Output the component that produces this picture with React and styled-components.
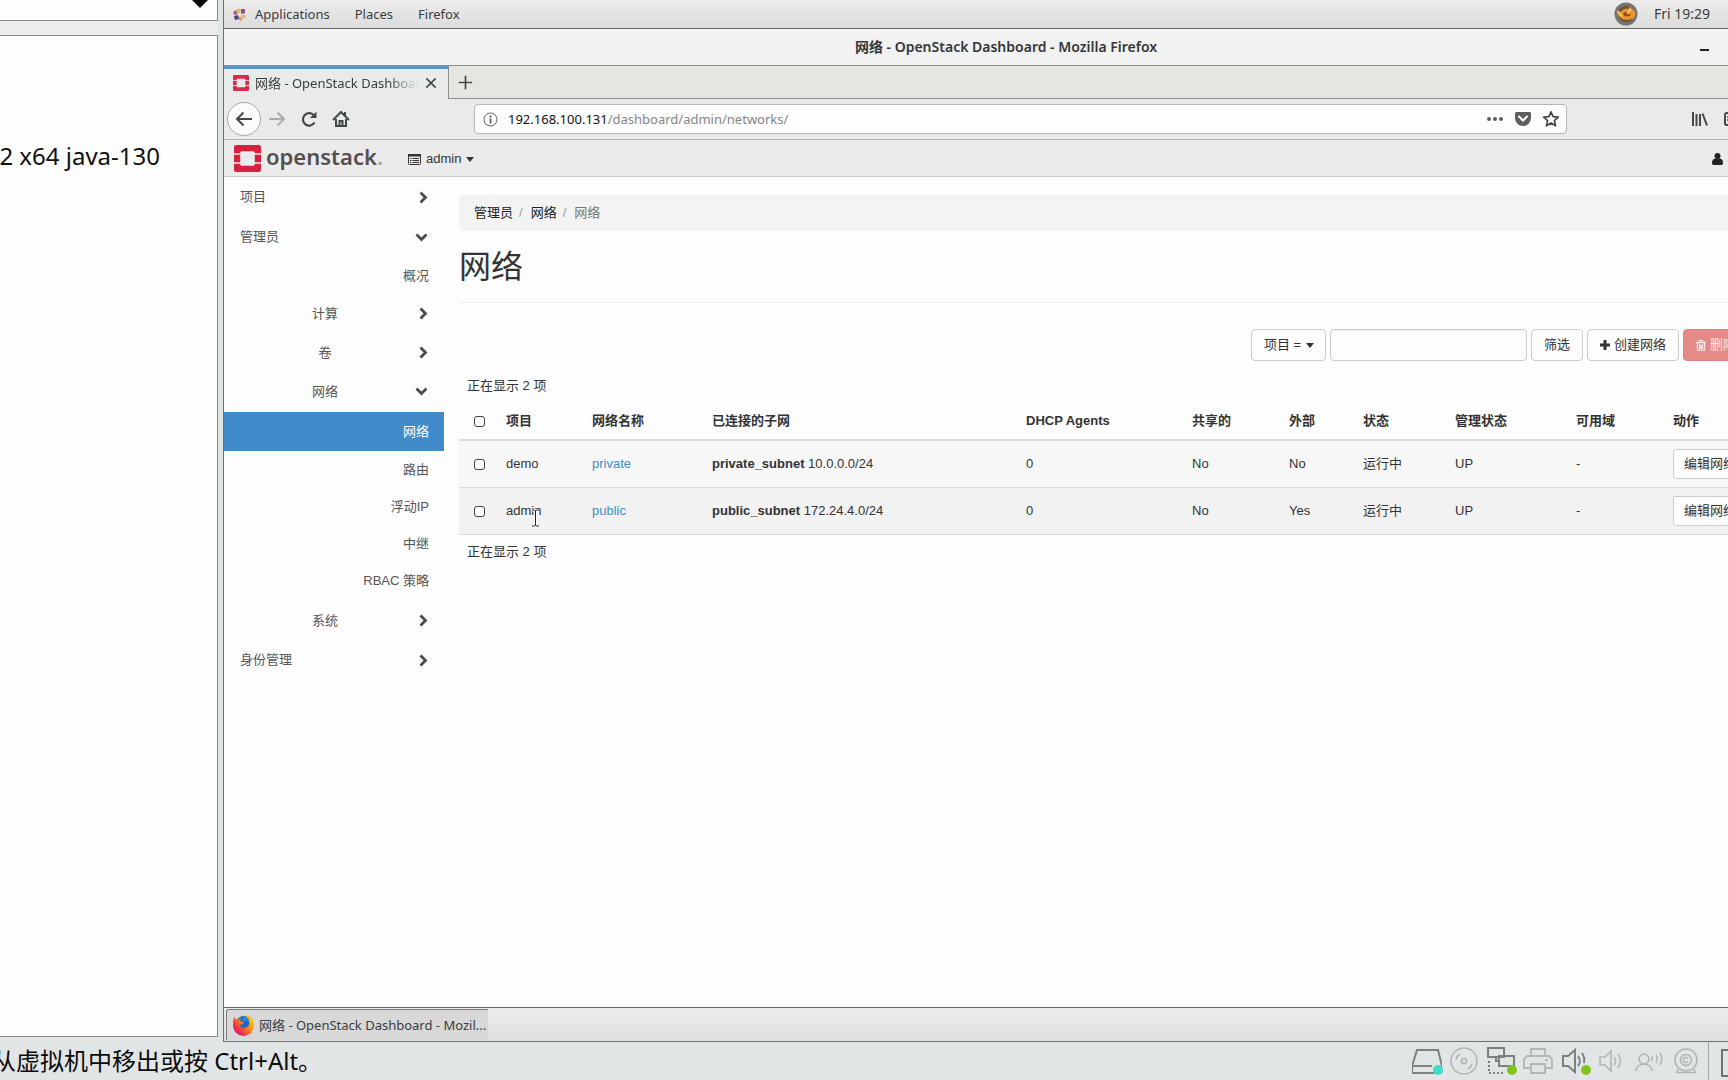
import React from "react";
import styled, { createGlobalStyle, css } from "styled-components";

const shellFont = `"Noto Sans", "Noto Sans CJK SC", sans-serif`;
const pageFont = `"Liberation Sans", "Noto Sans CJK SC", sans-serif`;

const GlobalStyle = createGlobalStyle`
  *, *::before, *::after { box-sizing: border-box; }
  body { margin: 0; overflow: hidden; background: #e2e5e6; }
  button, input, select { font: inherit; color: inherit; margin: 0; }
  svg { display: block; flex: none; }
  ul, ol { list-style: none; margin: 0; padding: 0; }
  a { color: inherit; text-decoration: none; }
`;

/* ---------- host window ---------- */

const Host = styled.div`
  display: flex;
  flex-direction: column;
  height: 100vh;
  overflow: hidden;
  background: #e2e5e6;
`;

const Workspace = styled.div`
  flex: 1;
  min-height: 0;
  display: flex;
  gap: 5px;
`;

const Library = styled.aside`
  flex: none;
  width: 218px;
  display: flex;
  flex-direction: column;
  gap: 14px;
  padding-bottom: 5px;
  background: linear-gradient(#ececec 0 40px, #e2e5e6 40px);
  font: 24px/32px ${shellFont};
  color: #111;
`;

const Summary = styled.section`
  height: 21px;
  display: flex;
  justify-content: flex-end;
  padding-right: 9px;
  background: #fdfdfd;
  border: solid #8a8a8a;
  border-width: 0 1px 1px 0;
`;

const Inventory = styled.section`
  flex: 1;
  display: flex;
  align-items: flex-start;
  justify-content: flex-end;
  padding: 104px 57px 0 0;
  overflow: hidden;
  white-space: nowrap;
  background: #fdfdfd;
  border: solid #8a8a8a;
  border-width: 1px 1px 1px 0;
`;

const StatusBar = styled.footer`
  flex: none;
  height: 38px;
  display: flex;
  align-items: center;
  justify-content: space-between;
  overflow: hidden;
  font: 24px/38px ${shellFont};
  color: #0b0b0b;
  white-space: nowrap;
`;

const Hint = styled.p`
  margin: 0 0 0 -8px;
`;

const Devices = styled.ul`
  display: flex;
  align-items: center;
  height: 38px;
  gap: 7px;
`;

const Device = styled.li`
  position: relative;
  width: 30px;
  height: 30px;
  color: ${(p) => (p.$on ? "#7c8082" : "#b3b6b8")};
`;

const Lamp = styled.span`
  position: absolute;
  right: -1px;
  bottom: 1px;
  width: 10px;
  height: 10px;
  border-radius: 50%;
  background: ${(p) => p.$color};
`;

const ScreenToggle = styled.li`
  height: 38px;
  width: 20px;
  overflow: hidden;
  border-left: 1px solid #a5a8a9;
  padding: 7px 0 0 12px;
  color: #6f7375;
`;

/* ---------- guest desktop ---------- */

const Viewport = styled.div`
  flex: 1;
  min-width: 0;
  overflow: hidden;
  border: solid #707070;
  border-width: 0 0 1px 1px;
`;

const Desktop = styled.div`
  width: calc(100% + 60px);
  height: 100%;
  display: flex;
  flex-direction: column;
  font: 14px/20px ${shellFont};
  color: #3a3c3e;
  background: #fdfdfd;
`;

const TopPanel = styled.header`
  flex: none;
  height: 29px;
  display: flex;
  align-items: center;
  padding: 0 78px 0 8px;
  font-size: 13px;
  background: linear-gradient(#ececec, #dcdcdc);
  border-bottom: 1px solid #666;
`;

const PanelButton = styled.button`
  display: flex;
  align-items: center;
  gap: 8px;
  height: 28px;
  padding: 0;
  margin-right: 25px;
  border: 0;
  background: none;
`;

const Clock = styled.time`
  margin-left: 16px;
  font-size: 14px;
`;

const Push = styled.span`
  flex: 1;
`;

const TitleBar = styled.div`
  flex: none;
  height: 37px;
  display: grid;
  grid-template-columns: 1fr auto 1fr;
  align-items: center;
  font-size: 14px;
  font-weight: 600;
  color: #33373a;
  background: linear-gradient(#f7f7f7, #f2f2f2 8px);
  border-bottom: 1px solid #8f908e;
`;

const Minimise = styled.button`
  justify-self: end;
  display: flex;
  align-items: center;
  width: 30px;
  height: 28px;
  margin-right: 62px;
  padding: 5px 0 0 4px;
  border: 0;
  background: none;
  color: #202426;
`;

const TabStrip = styled.div`
  flex: none;
  height: 33px;
  display: flex;
  background: #e6e6e3;
`;

const Tab = styled.div`
  width: 225px;
  display: flex;
  align-items: center;
  gap: 6px;
  padding: 0 10px 2px 9px;
  font-size: 13px;
  background: #e9ebea;
  border-top: 3px solid #5b93bf;
  border-right: 1px solid #8f908e;
`;

const TabLabel = styled.span`
  flex: 1;
  overflow: hidden;
  white-space: nowrap;
  mask-image: linear-gradient(90deg, #000 82%, transparent 100%);
`;

const TabTools = styled.div`
  flex: 1;
  padding-left: 5px;
  border-bottom: 1px solid #8f908e;
`;

const IconButton = styled.button`
  display: grid;
  place-items: center;
  flex: none;
  width: ${(p) => p.$size || 32}px;
  height: ${(p) => p.$height || p.$size || 32}px;
  padding: 0;
  border: 0;
  background: none;
  color: ${(p) => (p.$dim ? "#a9acaa" : "#45484a")};
  ${(p) =>
    p.$round &&
    css`
      border: 1px solid #aaa;
      border-radius: 50%;
      background: #fbfbfb;
    `}
`;

const NavBar = styled.div`
  flex: none;
  height: 41px;
  display: flex;
  align-items: center;
  padding: 0 8px 0 3px;
  background: #e8ebe8;
  border-bottom: 1px solid #b1b3b1;
`;

const NavGap = styled.span`
  width: 117px;
`;

const AddressBar = styled.div`
  flex: 1;
  display: flex;
  align-items: center;
  gap: 10px;
  height: 30px;
  padding: 0 1px 0 8px;
  background: #fdfdfd;
  border: 1px solid #b4b5b4;
  border-radius: 4px;
  color: #606264;
`;

const AddressText = styled.a`
  flex: 1;
  font-size: 13px;
  color: #858585;
`;

const HostName = styled.span`
  color: #111;
`;

const AddressTools = styled.span`
  display: flex;
`;

/* ---------- dashboard ---------- */

const Page = styled.div`
  flex: 1;
  min-height: 0;
  display: flex;
  flex-direction: column;
  font: 13px/20px ${pageFont};
  color: #333;
`;

const SiteHeader = styled.header`
  flex: none;
  height: 37px;
  display: flex;
  align-items: center;
  padding: 0 12px 0 10px;
  background: #ebebeb;
  border-bottom: 1px solid #c9c9c9;
`;

const Brand = styled.a`
  display: flex;
  align-items: center;
  gap: 5px;
  margin-right: 25px;
  font: 600 22px/32px "Noto Sans", sans-serif;
  color: #55504f;
`;

const BrandName = styled.span`
  margin-top: -4px;
`;

const BrandDot = styled.span`
  color: #a3a3a3;
`;

const MenuButton = styled.button`
  display: flex;
  align-items: center;
  gap: 5px;
  padding: 2px 0 0;
  border: 0;
  background: none;
`;

const Body = styled.div`
  flex: 1;
  min-height: 0;
  display: flex;
`;

const Sidebar = styled.nav`
  flex: none;
  width: 220px;
  color: #555;
`;

const Group = styled.ul`
  padding: ${(p) => (p.$nested ? "1px 0 2px" : "0")};
`;

const SectionButton = styled.button`
  display: grid;
  grid-template-columns: 1fr 20px;
  align-items: center;
  width: 100%;
  height: ${(p) => (p.$sub ? 39 : 40)}px;
  padding: 0 16px;
  text-align: ${(p) => (p.$sub ? "center" : "left")};
  border: 0;
  background: none;
  svg { justify-self: end; }
`;

const SectionName = styled.span`
  padding-left: ${(p) => (p.$sub ? 2 : 0)}px;
`;

const Leaf = styled.a`
  display: flex;
  align-items: center;
  justify-content: flex-end;
  height: 37px;
  padding-right: 15px;
  ${(p) =>
    p.$active &&
    css`
      height: 39px;
      background: #428bca;
      color: #fff;
    `}
`;

const Main = styled.main`
  position: relative;
  flex: 1;
  min-width: 0;
  padding: 18px 15px 0;
`;

const Breadcrumb = styled.ol`
  display: flex;
  align-items: center;
  height: 36px;
  padding: 0 15px;
  background: #f3f3f3;
  border-radius: 4px;
`;

const Crumb = styled.li`
  color: #222;
  & + &::before {
    content: "/";
    padding: 0 8px 0 6px;
    color: #999;
  }
  &:last-child { color: #777; }
`;

const Heading = styled.h1`
  margin: 0;
  padding: 14px 0;
  height: 72px;
  font-size: 32px;
  line-height: 44px;
  font-weight: 400;
  color: #333;
  border-bottom: 1px solid #ececec;
`;

const Actions = styled.form`
  display: flex;
  justify-content: flex-end;
  gap: 4px;
  padding: 26px 0 14px;
`;

const control = css`
  height: 32px;
  border: 1px solid #ccc;
  border-radius: 4px;
  background: #fdfdfd;
`;

const FilterField = styled.label`
  position: relative;
  display: flex;
  align-items: center;
`;

const FilterSelect = styled.select`
  ${control}
  appearance: none;
  width: 75px;
  padding: 0 0 0 12px;
`;

const SelectCaret = styled.span`
  position: absolute;
  right: 12px;
  pointer-events: none;
`;

const FilterInput = styled.input`
  ${control}
  width: 197px;
  padding: 0 8px;
  box-shadow: inset 0 1px 1px rgba(0, 0, 0, 0.06);
`;

const Button = styled.button`
  ${control}
  display: flex;
  align-items: center;
  gap: 4px;
  padding: 0 12px;
  white-space: nowrap;
  ${(p) =>
    p.$danger &&
    css`
      padding-right: 10px;
      background: #e48b88;
      border-color: #dd8380;
      color: #fbe9e8;
    `}
`;

const Count = styled.p`
  margin: 0;
  padding: ${(p) => (p.$after ? "6px 8px 0" : "0 8px 2px")};
  line-height: 22px;
`;

const Table = styled.table`
  width: 100%;
  table-layout: fixed;
  border-collapse: collapse;
`;

const Th = styled.th`
  height: 41px;
  padding: 4px 8px 0;
  text-align: left;
  vertical-align: middle;
  white-space: nowrap;
  font-weight: 700;
  border-bottom: 2px solid #dadada;
`;

const Row = styled.tr`
  height: 47px;
  background: ${(p) => (p.$shaded ? "#f2f2f2" : "#f7f7f7")};
  border-bottom: 1px solid #dadada;
`;

const Td = styled.td`
  padding: 0 8px;
  white-space: nowrap;
`;

const Tick = styled.input`
  appearance: none;
  display: block;
  width: 11px;
  height: 11px;
  margin: 1px 0 0 7px;
  border: 1px solid #444;
  border-radius: 3px;
  background: #fff;
`;

const NetLink = styled.a`
  color: #428bca;
`;

const Split = styled.span`
  display: flex;
`;

const SplitButton = styled.button`
  height: 30px;
  padding: 0 10px;
  border: 1px solid #ccc;
  border-radius: 3px 0 0 3px;
  background: #fdfdfd;
  & + & {
    margin-left: -1px;
    padding: 0 6px;
    border-radius: 0 3px 3px 0;
  }
`;

const Pointer = styled.span`
  position: absolute;
  left: 87px;
  top: 332px;
`;

const Taskbar = styled.footer`
  flex: none;
  height: 34px;
  padding: 1px 2px;
  background: linear-gradient(#ececec, #dedede);
  border-top: 1px solid #666;
`;

const TaskButton = styled.button`
  display: flex;
  align-items: center;
  gap: 4px;
  width: 262px;
  height: 31px;
  padding: 0 5px;
  font-size: 13px;
  white-space: nowrap;
  background: #d8d8d8;
  border: solid #7d7d7d;
  border-width: 1px 0 0 1px;
  border-radius: 3px 0 0 0;
`;

/* ---------- drawings ---------- */

const Caret = () => (
  <svg width="8" height="5" viewBox="0 0 8 5"><path d="M0 0h8L4 5z" fill="currentColor" /></svg>
);

const Chevron = ({ open }) =>
  open ? (
    <svg width="13" height="9" viewBox="0 0 13 9"><path d="M1.5 1.5l5 5 5-5" fill="none" stroke="#4a4a4a" strokeWidth="2.8" /></svg>
  ) : (
    <svg width="9" height="13" viewBox="0 0 9 13"><path d="M1.5 1.5l5 5-5 5" fill="none" stroke="#4a4a4a" strokeWidth="2.8" /></svg>
  );

const StackLogo = ({ size, color }) => (
  <svg width={size} height={size} viewBox="0 0 26 26">
    <g fill={color}>
      <path d="M2 0h22a2 2 0 0 1 2 2v6h-6V7.500a1.500 1.500 0 0 0-1.500-1.500h-11A1.500 1.500 0 0 0 6 7.500V8H0V2a2 2 0 0 1 2-2z" />
      <path d="M0 9.500h6v7H0zM20 9.500h6v7h-6z" />
      <path d="M2 26h22a2 2 0 0 0 2-2v-6h-6v.5a1.500 1.500 0 0 1-1.500 1.500h-11A1.500 1.500 0 0 1 6 18.500V18H0v6a2 2 0 0 0 2 2z" />
    </g>
  </svg>
);

const Pinwheel = () => (
  <svg width="15" height="15" viewBox="0 0 15 15">
    <path d="M6 1l3 2-2 4-3-3z" fill="#d9c45a" />
    <path d="M9 2h4v4L9 7z" fill="#8d4d8b" />
    <path d="M13 7l1 3-3 2-3-4z" fill="#e0c070" />
    <path d="M8 9l3 4-3 1-2-3z" fill="#dd9a6a" />
    <path d="M2 9l4-1 1 4-4 1z" fill="#4b4478" />
    <path d="M1 5l3-2 2 4-4 1z" fill="#b8578c" />
    <circle cx="7.500" cy="7.500" r="1" fill="#fff" />
  </svg>
);

const Orb = () => (
  <svg width="24" height="24" viewBox="0 0 24 24">
    <circle cx="12" cy="12" r="11.500" fill="#77736e" />
    <circle cx="12" cy="12" r="8" fill="#6d5238" />
    <path d="M2.500 8.500c2 0 3 1 4 2C8 7 12 6 14 7l2.500-2.500L18 7c4 1 4 8 1 9.500-4 2-9 2-12-.5-2-1-4-3-4.500-7.500z" fill="#ea9530" />
    <path d="M9 12c1-2 4-3 5-2l-2 2 5 .5c-1 2.500-6 3-8-.5z" fill="#8d4a14" />
    <path d="M4 10c2 0 2 3 4 4M13 11l4-4" stroke="#fbd28c" strokeWidth="1.500" fill="none" />
  </svg>
);

const FirefoxLogo = () => (
  <svg width="23" height="23" viewBox="0 0 23 23">
    <defs>
      <linearGradient id="fox" x1="1" y1="0" x2="0.100" y2="0.900">
        <stop offset="0" stopColor="#ffe226" />
        <stop offset="0.450" stopColor="#ff9412" />
        <stop offset="0.800" stopColor="#f0304a" />
        <stop offset="1" stopColor="#d3117c" />
      </linearGradient>
    </defs>
    <circle cx="12" cy="11" r="9" fill="#1c66c0" />
    <path d="M2 3l3 3 4-2-1 3 4 1-1 2-3 1c0 3 4 4 7 2 3-1 3-6 0-9l-1-3c5 0 8 5 8 10a10.500 10.500 0 0 1-21 1C1 9 1 6 2 3z" fill="url(#fox)" />
    <path d="M10 4c3-2 6-1 7 2l-2 1-4 0z" fill="#2b8ae0" />
  </svg>
);

const Stroke = ({ size = 18, w = 2, children }) => (
  <svg width={size} height={size} viewBox="0 0 18 18" fill="none" stroke="currentColor" strokeWidth={w}>{children}</svg>
);

const BackIcon = () => <Stroke><path d="M17 9H2M8.500 2.500L2 9l6.500 6.500" /></Stroke>;
const ForwardIcon = () => <Stroke><path d="M1 9h15M9.500 2.500L16 9l-6.500 6.500" /></Stroke>;
const ReloadIcon = () => (
  <Stroke><path d="M14.500 12.500A6.200 6.200 0 1 1 13.500 5" strokeWidth="2.200" /><path d="M16.500 1.500v6.500H10z" fill="currentColor" stroke="none" /></Stroke>
);
const HomeIcon = () => (
  <Stroke><path d="M1 10l8-8 8 8M4 9v7h10V9" /><path d="M7.500 16v-5h3v5M13 2v4" /></Stroke>
);
const InfoIcon = () => (
  <svg width="15" height="15" viewBox="0 0 15 15" fill="none" stroke="currentColor"><circle cx="7.500" cy="7.500" r="6.500" /><path d="M7.500 6.500v5M7.500 3.500v2" strokeWidth="1.800" /></svg>
);
const DotsIcon = () => (
  <svg width="18" height="18" viewBox="0 0 18 18" fill="#5c5f61"><circle cx="3" cy="9" r="2" /><circle cx="9" cy="9" r="2" /><circle cx="15" cy="9" r="2" /></svg>
);
const PocketIcon = () => (
  <svg width="18" height="18" viewBox="0 0 18 18"><path d="M2.500 2h13A1.500 1.500 0 0 1 17 3.500V8A8 8 0 0 1 1 8V3.500A1.500 1.500 0 0 1 2.500 2z" fill="#5c5f61" /><path d="M5 6.500l4 4 4-4" fill="none" stroke="#fff" strokeWidth="2" strokeLinecap="round" /></svg>
);
const StarIcon = () => (
  <Stroke><path d="M9 1.800l2.100 4.800 5.200.5-3.900 3.500 1.100 5.200L9 13.100l-4.500 2.700 1.100-5.200L1.700 7.100l5.200-.5z" strokeWidth="1.700" strokeLinejoin="round" /></Stroke>
);
const LibraryIcon = () => <Stroke><path d="M2 2v14M5.500 4v12M9 4v12M11.500 3.500L16 15.500" /></Stroke>;
const PanelIcon = () => <Stroke><rect x="2" y="3" width="14" height="12" rx="2" /><path d="M4 7h4M4 10h4M10 3v12" strokeWidth="1.500" /></Stroke>;
const BurgerIcon = () => <Stroke><path d="M2 4h14M2 9h14M2 14h14" /></Stroke>;

const ListIcon = () => (
  <svg width="13" height="11" viewBox="0 0 13 11"><rect x="0.500" y="0.500" width="12" height="10" rx="1" fill="none" stroke="currentColor" /><path d="M0 0h13v2.500H0zM2 4h1.500v1H2zM2 6h1.500v1H2zM2 8h1.500v1H2zM4.500 4H11v1H4.500zM4.500 6H11v1H4.500zM4.500 8H11v1H4.500z" fill="currentColor" /></svg>
);
const UserIcon = () => (
  <svg width="11" height="12" viewBox="0 0 11 12" fill="#222"><circle cx="5.500" cy="3" r="3" /><path d="M3 5.500h5c2 .5 3 2 3 4.500 0 1.500-.8 2-2 2H2c-1.200 0-2-.5-2-2 0-2.500 1-4 3-4.500z" /></svg>
);
const PlusIcon = () => (
  <svg width="10" height="10" viewBox="0 0 10 10"><path d="M5 0v10M0 5h10" stroke="currentColor" strokeWidth="3" /></svg>
);
const TrashIcon = () => (
  <svg width="10" height="11" viewBox="0 0 10 11"><path d="M3.500 1.500v-1h3v1M0 2.500h10M1.500 3v7.200h7V3M3.600 4.500v4.500M6.400 4.500v4.500M5 4.500v4.500" fill="none" stroke="currentColor" strokeWidth="1.300" /></svg>
);

const Line = ({ w = 2, children }) => (
  <svg width="30" height="30" viewBox="0 0 30 30" fill="none" stroke="currentColor" strokeWidth={w}>{children}</svg>
);

const devices = [
  { name: "硬盘", on: true, lamp: "#3fdcc8", art: <Line><path d="M5 4h21l4 16v7H0v-7zM0 20h20" /></Line> },
  { name: "光驱", art: <Line w={1.600}><circle cx="15" cy="15" r="13" /><circle cx="15" cy="15" r="2.500" /><path d="M7 14a8 8 0 0 1 4-6M23 18a8 8 0 0 1-4 5" /></Line> },
  { name: "网络适配器", on: true, lamp: "#7fc41c", art: <Line><path d="M2 2h16v9H2zM13 10h15v10H13z" /><path d="M10 11v4h3" /><path d="M3 15v12h16" strokeDasharray="2 2" /></Line> },
  { name: "打印机", art: <Line w={1.800}><path d="M8 10V3h14v7M8 22H1V13l3-3h22l3 3v9h-7M8 18h14v9H8zM22 14h3" /></Line> },
  { name: "声卡", on: true, lamp: "#7fc41c", art: <Line><path d="M3 10h5l7-6v22l-7-6H3z" /><path d="M18 10a8 8 0 0 1 0 10M22 7a13 13 0 0 1 2 10" /></Line> },
  { name: "扬声器", art: <Line w={1.600}><path d="M3 11h5l6-6v20l-6-6H3z" /><path d="M17 11a7 7 0 0 1 0 8M21 8a12 12 0 0 1 0 14" /></Line> },
  { name: "麦克风", art: <Line w={1.600}><circle cx="10" cy="13" r="5" /><path d="M2 25c1-5 4-7 8-7s7 2 8 7M18 10v5M22 9a8 8 0 0 1 0 8M26 7a12 12 0 0 1 0 12" /></Line> },
  { name: "摄像头", art: <Line w={1.600}><circle cx="15" cy="14" r="11" /><circle cx="15" cy="14" r="5.500" /><path d="M17 12.500a2.500 2.500 0 1 0 0 3M7 23l-1 3.500h18L23 23" /></Line> },
];

/* ---------- data ---------- */

const columns = [
  [39, ""], [86, "项目"], [120, "网络名称"], [314, "已连接的子网"], [166, "DHCP Agents"],
  [97, "共享的"], [74, "外部"], [92, "状态"], [121, "管理状态"], [97, "可用域"], [108, "动作"],
];

const networks = [
  { project: "demo", name: "private", subnet: "private_subnet", cidr: "10.0.0.0/24", agents: 0, shared: "No", external: "No" },
  { project: "admin", name: "public", subnet: "public_subnet", cidr: "172.24.4.0/24", agents: 0, shared: "No", external: "Yes" },
];

const Section = ({ name, sub, open }) => (
  <SectionButton type="button" $sub={sub} aria-expanded={!!open}>
    <SectionName $sub={sub}>{name}</SectionName>
    <Chevron open={open} />
  </SectionButton>
);

const Navigation = () => (
  <Sidebar>
    <Group>
      <li><Section name="项目" /></li>
      <li>
        <Section name="管理员" open />
        <Group>
          <li><Leaf href="#overview">概况</Leaf></li>
          <li><Section name="计算" sub /></li>
          <li><Section name="卷" sub /></li>
          <li>
            <Section name="网络" sub open />
            <Group $nested>
              {["网络", "路由", "浮动IP", "中继", "RBAC 策略"].map((label, i) => (
                <li key={label}><Leaf href={`#net-${i}`} $active={i === 0}>{label}</Leaf></li>
              ))}
            </Group>
          </li>
          <li><Section name="系统" sub /></li>
        </Group>
      </li>
      <li><Section name="身份管理" /></li>
    </Group>
  </Sidebar>
);

const NetworkTable = () => (
  <Table>
    <colgroup>{columns.map(([w], i) => <col key={i} width={w} />)}</colgroup>
    <thead>
      <tr>
        {columns.map(([, label], i) => (
          <Th key={i} scope="col">{label || <Tick type="checkbox" aria-label="全选" />}</Th>
        ))}
      </tr>
    </thead>
    <tbody>
      {networks.map((n, i) => (
        <Row key={n.name} $shaded={i % 2 === 1}>
          <Td><Tick type="checkbox" aria-label={n.name} /></Td>
          <Td>{n.project}</Td>
          <Td><NetLink href={`#${n.name}`}>{n.name}</NetLink></Td>
          <Td><strong>{n.subnet}</strong> {n.cidr}</Td>
          <Td>{n.agents}</Td>
          <Td>{n.shared}</Td>
          <Td>{n.external}</Td>
          <Td>运行中</Td>
          <Td>UP</Td>
          <Td>-</Td>
          <Td>
            <Split>
              <SplitButton type="button">编辑网络</SplitButton>
              <SplitButton type="button" aria-label="更多"><Caret /></SplitButton>
            </Split>
          </Td>
        </Row>
      ))}
    </tbody>
  </Table>
);

const Dashboard = () => (
  <Page>
    <SiteHeader>
      <Brand href="#home">
        <StackLogo size={27} color="#d4213d" />
        <BrandName>openstack<BrandDot>.</BrandDot></BrandName>
      </Brand>
      <MenuButton type="button"><ListIcon />admin<Caret /></MenuButton>
      <Push />
      <MenuButton type="button"><UserIcon />admin<Caret /></MenuButton>
    </SiteHeader>
    <Body>
      <Navigation />
      <Main>
        <Breadcrumb>
          <Crumb><a href="#admin">管理员</a></Crumb>
          <Crumb><a href="#network">网络</a></Crumb>
          <Crumb>网络</Crumb>
        </Breadcrumb>
        <Heading>网络</Heading>
        <Actions onSubmit={(e) => e.preventDefault()}>
          <FilterField>
            <FilterSelect aria-label="筛选条件"><option>项目 =</option></FilterSelect>
            <SelectCaret><Caret /></SelectCaret>
          </FilterField>
          <FilterInput type="text" aria-label="筛选内容" />
          <Button type="submit">筛选</Button>
          <Button type="button"><PlusIcon />创建网络</Button>
          <Button type="button" $danger disabled><TrashIcon />删除网络</Button>
        </Actions>
        <Count>正在显示 2 项</Count>
        <NetworkTable />
        <Count $after>正在显示 2 项</Count>
        <Pointer aria-hidden="true">
          <svg width="9" height="18" viewBox="0 0 9 18"><path d="M1 1h2.500l1 1 1-1H8M4.500 2v14M1 17h2.500l1-1 1 1H8" fill="none" stroke="#fff" strokeWidth="3" /><path d="M1 1h2.500l1 1 1-1H8M4.500 2v14M1 17h2.500l1-1 1 1H8" fill="none" stroke="#222" /></svg>
        </Pointer>
      </Main>
    </Body>
  </Page>
);

export default function App() {
  return (
    <Host>
      <GlobalStyle />
      <Workspace>
        <Library>
          <Summary>
            <svg width="16" height="8" viewBox="0 0 16 8"><path d="M0 0h16L8 8z" fill="#0a0a0a" /></svg>
          </Summary>
          <Inventory>2 x64 java-130</Inventory>
        </Library>
        <Viewport>
          <Desktop>
            <TopPanel>
              <PanelButton type="button"><Pinwheel />Applications</PanelButton>
              <PanelButton type="button">Places</PanelButton>
              <PanelButton type="button">Firefox</PanelButton>
              <Push />
              <Orb />
              <Clock>Fri 19:29</Clock>
            </TopPanel>
            <TitleBar>
              <span />
              <span>网络 - OpenStack Dashboard - Mozilla Firefox</span>
              <Minimise type="button" aria-label="最小化">
                <svg width="9" height="2" viewBox="0 0 9 2"><path d="M0 0h9v2H0z" fill="currentColor" /></svg>
              </Minimise>
            </TitleBar>
            <TabStrip>
              <Tab>
                <StackLogo size={16} color="#d92b4b" />
                <TabLabel>网络 - OpenStack Dashboard</TabLabel>
                <IconButton $size={14} aria-label="关闭标签页"><Stroke size={14}><path d="M3 3l12 12M15 3L3 15" /></Stroke></IconButton>
              </Tab>
              <TabTools>
                <IconButton $size={22} $height={32} aria-label="新建标签页"><Stroke size={15}><path d="M9 1v16M1 9h16" /></Stroke></IconButton>
              </TabTools>
            </TabStrip>
            <NavBar>
              <IconButton $size={34} $round aria-label="后退"><BackIcon /></IconButton>
              <IconButton $dim aria-label="前进"><ForwardIcon /></IconButton>
              <IconButton aria-label="刷新"><ReloadIcon /></IconButton>
              <IconButton aria-label="主页"><HomeIcon /></IconButton>
              <NavGap />
              <AddressBar>
                <InfoIcon />
                <AddressText href="#address"><HostName>192.168.100.131</HostName>/dashboard/admin/networks/</AddressText>
                <AddressTools>
                  <IconButton $size={28} aria-label="页面操作"><DotsIcon /></IconButton>
                  <IconButton $size={28} aria-label="Pocket"><PocketIcon /></IconButton>
                  <IconButton $size={28} aria-label="书签"><StarIcon /></IconButton>
                </AddressTools>
              </AddressBar>
              <NavGap />
              <IconButton aria-label="书库"><LibraryIcon /></IconButton>
              <IconButton aria-label="侧边栏"><PanelIcon /></IconButton>
              <IconButton aria-label="菜单"><BurgerIcon /></IconButton>
            </NavBar>
            <Dashboard />
            <Taskbar>
              <TaskButton type="button"><FirefoxLogo />网络 - OpenStack Dashboard - Mozil...</TaskButton>
            </Taskbar>
          </Desktop>
        </Viewport>
      </Workspace>
      <StatusBar>
        <Hint>从虚拟机中移出或按 Ctrl+Alt。</Hint>
        <Devices>
          {devices.map((d) => (
            <Device key={d.name} $on={d.on} title={d.name}>
              {d.art}
              {d.lamp && <Lamp $color={d.lamp} />}
            </Device>
          ))}
          <ScreenToggle>
            <svg width="20" height="28" viewBox="0 0 20 28"><path d="M19 1H1v26h18" fill="none" stroke="currentColor" strokeWidth="2" /></svg>
          </ScreenToggle>
        </Devices>
      </StatusBar>
    </Host>
  );
}
